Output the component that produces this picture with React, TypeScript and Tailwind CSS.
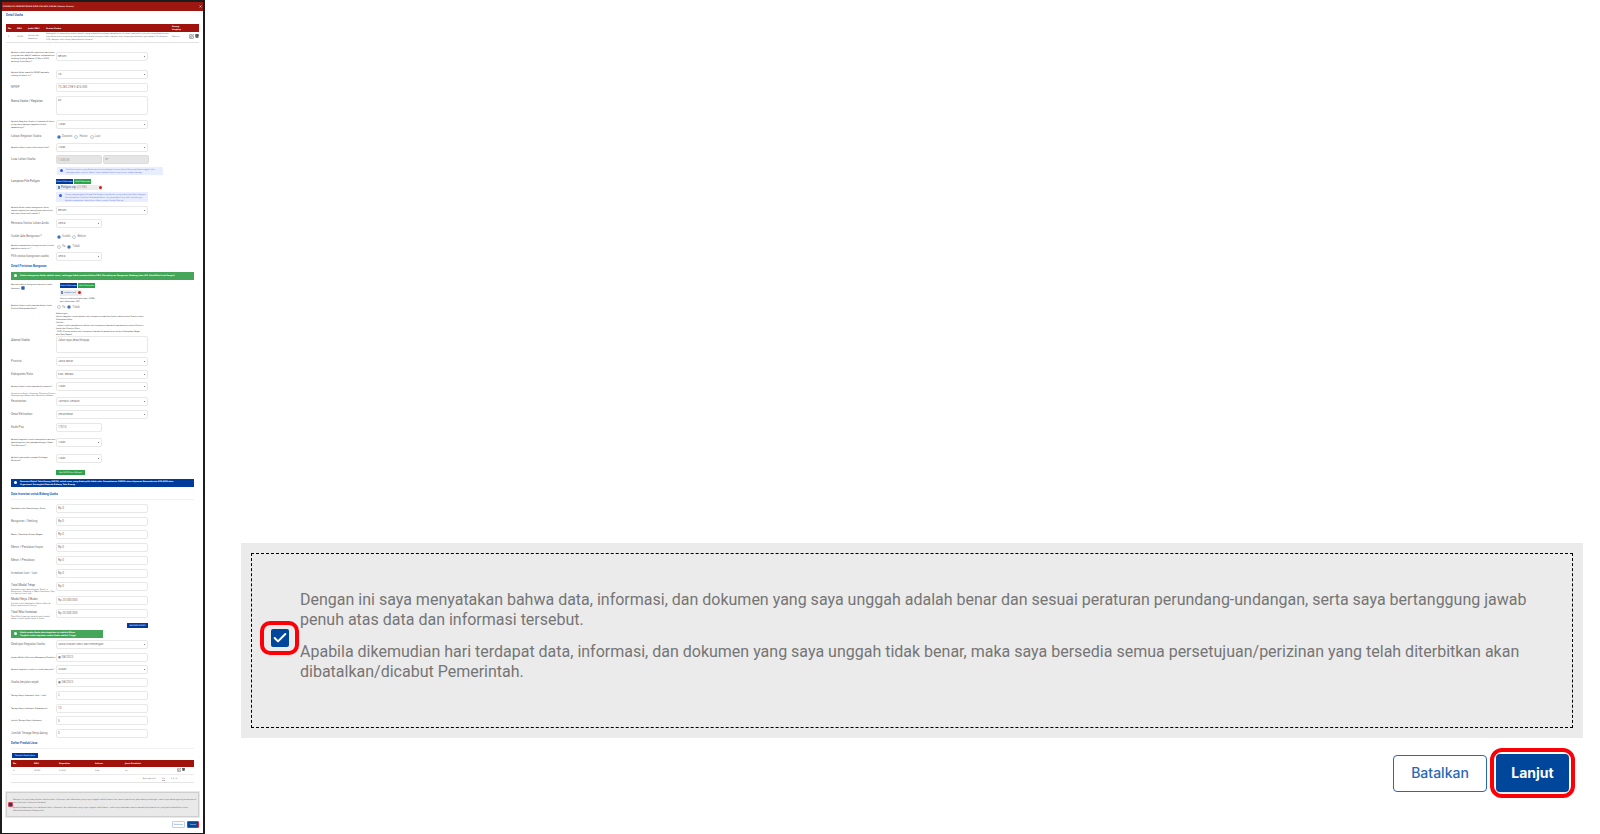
import { useState } from "react";
import type { ReactNode } from "react";
import { Check, CircleAlert, SquarePen, Trash2, X } from "lucide-react";

const DECLARATION = [
  "Dengan ini saya menyatakan bahwa data, informasi, dan dokumen yang saya unggah adalah benar dan sesuai peraturan perundang-undangan, serta saya bertanggung jawab penuh atas data dan informasi tersebut.",
  "Apabila dikemudian hari terdapat data, informasi, dan dokumen yang saya unggah tidak benar, maka saya bersedia semua persetujuan/perizinan yang telah diterbitkan akan dibatalkan/dicabut Pemerintah.",
];

const TEXT = "font-['Roboto',sans-serif] text-[3px]";
const BOX = "rounded-[2px] border border-[#e8e8e8] bg-white px-px text-[#777]";
const HEADING = "flex items-center font-['Roboto',sans-serif] text-[3px] font-bold text-[#2a68b4]";

const labelText = (label: string) => (label.length > 28 ? "text-[#333]" : `text-[#777] ${TEXT}`);

interface RowProps {
  id: string;
  label: string;
  height?: string;
  children: ReactNode;
}

const Row = ({ id, label, height = "h-[13px]", children }: RowProps) => (
  <div className={`flex items-center ${height}`}>
    <label htmlFor={id} className={`w-[45px] shrink-0 ${labelText(label)}`}>
      {label}
    </label>
    {children}
  </div>
);

interface FieldProps {
  id: string;
  label: string;
  value: string;
  height?: string;
  short?: boolean;
}

const SelectRow = ({ id, label, value, height, short }: FieldProps) => (
  <Row id={id} label={label} height={height}>
    <div className={`relative ${short ? "w-[46px]" : "w-[92px]"}`}>
      <select id={id} className={`block h-[9px] w-full appearance-none ${BOX} ${TEXT}`}>
        <option>{value}</option>
      </select>
      <span className="pointer-events-none absolute top-[4px] right-[3px] size-px bg-[#888]" />
    </div>
  </Row>
);

const InputRow = ({ id, label, value, height, short }: FieldProps) => (
  <Row id={id} label={label} height={height}>
    <input
      id={id}
      defaultValue={value}
      className={`h-[9px] ${BOX} ${TEXT} ${short ? "w-[46px]" : "w-[92px]"}`}
    />
  </Row>
);

interface RadioRowProps {
  name: string;
  label: string;
  options: string[];
  selected: string;
  height?: string;
}

const RadioRow = ({ name, label, options, selected, height = "h-[10px]" }: RadioRowProps) => (
  <fieldset className={`flex items-center ${height}`}>
    <span className={`w-[45px] shrink-0 ${labelText(label)}`}>{label}</span>
    <div className={`flex gap-[2px] pl-px ${TEXT}`}>
      {options.map((option) => (
        <label key={option} className="flex items-center gap-px text-[#888]">
          <input
            type="radio"
            name={name}
            defaultChecked={option === selected}
            className="size-[4px] appearance-none rounded-full border border-[#c4ccd8] bg-white checked:border-[#8fb0dc] checked:bg-[#1f5fae]"
          />
          {option}
        </label>
      ))}
    </div>
  </fieldset>
);

const FileButtons = () => (
  <div className="flex h-[5px] gap-px text-white">
    <button type="button" className="w-[17px] bg-[#003a9b]">
      Unduh Dokumen
    </button>
    <button type="button" className="w-[17px] bg-[#2fa34c]">
      Lihat Dokumen
    </button>
  </div>
);

const Info = ({ className, children }: { className: string; children: ReactNode }) => (
  <div className={`flex gap-[3px] bg-[#e8edff] pl-[3px] text-[#5f7be6] ${className}`}>
    <span className="mt-[2px] size-[3px] shrink-0 rounded-full bg-[#2f5be0]" />
    <p className="pt-px">{children}</p>
  </div>
);

const INVESTMENTS = [
  ["tanah", "Pembelian dan Pematangan Tanah"],
  ["gedung", "Bangunan / Gedung"],
  ["mesin-dn", "Mesin / Peralatan Dalam Negeri"],
  ["mesin-impor", "Mesin / Peralatan Impor"],
  ["mesin", "Mesin / Peralatan"],
  ["lain", "Investasi Lain - Lain"],
];

const TOTALS = [
  {
    id: "modal-tetap",
    label: "Total Modal Tetap",
    note: "Pembelian dan Pematangan Tanah + Bangunan / Gedung + Mesin Peralatan (Rp) + Investasi Lain Lain",
    value: "Rp 0",
    height: "h-[14px]",
  },
  {
    id: "modal-kerja",
    label: "Modal Kerja 3 Bulan",
    note: "Contoh untuk Pembelian Bahan Baku & Biaya operasional lainnya",
    value: "Rp 20.000.000",
    height: "h-[13px]",
  },
  {
    id: "nilai-investasi",
    label: "Total Nilai Investasi",
    note: "Total Nilai Investasi adalah total modal tetap + total modal kerja 3 bulan",
    value: "Rp 20.000.000",
    height: "h-[13px]",
  },
];

const FormPreview = () => (
  <aside className="w-[205px] shrink-0 border-2 border-[#1c1c1c] bg-white pb-[5px] font-['DejaVu_Sans',sans-serif] text-[2px] leading-[3px] text-[#666]">
    <header className="flex h-[9px] items-center justify-between bg-[#9c1710] px-px text-[#f3d4d2]">
      <h1 className="font-bold">FORMULIR PENDAFTARAN DATA PELAKU USAHA (Badan Usaha)</h1>
      <button type="button" aria-label="Tutup">
        <X className="size-[3px]" strokeWidth={5} />
      </button>
    </header>

    <section className="px-[4px]">
      <h2 className={`h-[13px] pb-[5px] ${HEADING}`}>Detail Usaha</h2>
      <table className="w-full table-fixed text-left">
        <thead className="bg-[#a0120c] text-white">
          <tr className="h-[8px]">
            <th className="w-[11px] pl-[2px]">No</th>
            <th className="w-[11px]">KBLI</th>
            <th className="w-[18px]">Judul KBLI</th>
            <th>Uraian Usaha</th>
            <th className="w-[17px]">
              Ruang
              <br />
              Lingkup
            </th>
            <th className="w-[10px]" />
          </tr>
        </thead>
        <tbody>
          <tr className="h-[10px] border-b border-[#e2e2e2]">
            <td className="pl-[2px]">1</td>
            <td>11050</td>
            <td>
              Industri Air
              <br />
              Kemasan
            </td>
            <td>
              Kelompok ini mencakup usaha industri yang melakukan proses pengolahan air baku menjadi air minum yang
              dikemas dan siap dikonsumsi langsung, mengandung mineral maupun tidak, dengan atau tanpa penambahan gas
              seperti O2 ataupun CO2, dengan atau tanpa penambahan mineral
            </td>
            <td>Seluruh</td>
            <td>
              <span className="flex gap-px text-[#222]">
                <SquarePen className="size-[5px]" />
                <Trash2 className="size-[4px]" strokeWidth={4} />
              </span>
            </td>
          </tr>
        </tbody>
      </table>
    </section>

    <form className="px-[9px] pt-[3px]">
      <SelectRow
        id="perizinan"
        label="Apakah sudah memiliki perizinan berusaha yang berlaku efektif sebelum implementasi Undang-Undang Nomor 6 Tahun 2023 tentang Cipta Kerja ?"
        value="Belum"
        height="h-[22px]"
      />
      <SelectRow id="npwp" label="Apakah Anda memiliki NPWP berbeda cabang di lokasi ini?" value="Ya" />
      <InputRow id="npwp-nomor" label="NPWP" value="73.283.298.9-416.000" />
      <div className="flex h-[24px] items-center">
        <label htmlFor="nama" className={`w-[45px] self-start pt-[6px] ${TEXT}`}>
          Nama Usaha / Kegiatan
        </label>
        <textarea id="nama" defaultValue="air" className={`h-[19px] w-[92px] resize-none pt-[2px] ${BOX} ${TEXT}`} />
      </div>
      <SelectRow
        id="sama"
        label="Apakah Kegiatan Usaha ini berada di lokasi yang sama dengan kegiatan usaha sebelumnya?"
        value="Tidak"
      />
      <RadioRow
        name="lokasi"
        label="Lokasi Kegiatan Usaha"
        options={["Daratan", "Hutan", "Laut"]}
        selected="Daratan"
        height="h-[12px]"
      />
      <SelectRow id="lintas" label="Apakah lokasi usaha lintas darat laut?" value="Tidak" height="h-[10px]" />
      <Row id="luas" label="Luas Lahan Usaha" height="h-[14px]">
        <input
          id="luas"
          defaultValue="1.500,00"
          disabled
          className={`h-[9px] w-[46px] rounded-[2px] border border-[#dcdcdc] bg-[#e5e5e5] px-px text-[#999] ${TEXT}`}
        />
        <select
          aria-label="Satuan luas"
          disabled
          className={`ml-px h-[9px] w-[46px] appearance-none rounded-[2px] border border-[#dcdcdc] bg-[#e5e5e5] px-px text-[#999] ${TEXT}`}
        >
          <option>M²</option>
        </select>
      </Row>
      <Info className="ml-[46px] h-[8px] w-[106px]">
        Pastikan luasan yang Anda input sama dengan luasan lokasi file yang Anda unggah. Jika menggunakan satuan Hektar
        ubah terlebih dahulu ke satuan meter persegi.
      </Info>
      <div className="flex pt-[4px]">
        <span className={`w-[45px] shrink-0 pt-px ${TEXT}`}>Lampiran File Poligon</span>
        <div className="w-[92px]">
          <FileButtons />
          <div
            className={`mt-px flex h-[5px] w-[46px] items-center gap-px bg-[#ececec] pl-[2px] text-[#2a68b4] ${TEXT}`}
          >
            <span className="h-[3px] w-[2px] border border-[#5b8fcc]" />
            Poligon.zip
            <span className="text-[#999]">(22 KB)</span>
            <span className="ml-auto size-[3px] rounded-full bg-[#c3261e]" />
          </div>
          <Info className="mt-[2px] h-[10px]">
            Harap mengunggah Shape File Poligon (koordinat) yang sudah divalidasi dengan format berikut. Pastikan file
            berekstensi .zip yang berisi shp, dbf, shx dan prj. Apabila mengalami kesulitan silakan unduh format file
            zip.
          </Info>
        </div>
      </div>
      <SelectRow
        id="lahan"
        label="Apakah Anda sudah menguasai lahan melalui perjanjian sewa/pinjam pakai/jual beli atau lahan milik sendiri?"
        value="Belum"
        height="h-[17px]"
      />
      <SelectRow id="status-lahan" label="Rencana Status Lahan Anda" value="Sewa" height="h-[9px]" short />
      <div className="pt-[4px]">
        <RadioRow name="bangunan" label="Sudah Ada Bangunan ?" options={["Sudah", "Belum"]} selected="Sudah" />
        <RadioRow
          name="baru"
          label="Apakah memerlukan bangunan baru untuk kegiatan usaha ini ?"
          options={["Ya", "Tidak"]}
          selected="Tidak"
        />
      </div>
      <SelectRow id="status-bangunan" label="Pilih status bangunan usaha" value="Sewa" height="h-[10px]" short />

      <h3 className={`h-[10px] ${HEADING}`}>Detail Perizinan Bangunan</h3>
      <p className="flex h-[8px] items-center gap-[3px] bg-[#45a558] pl-[3px] font-bold text-white">
        <span className="size-[3px] rounded-full bg-white" />
        Status bangunan Anda adalah sewa, sehingga tidak membutuhkan PBG (Persetujuan Bangunan Gedung) dan SLF
        (Sertifikat Laik Fungsi)
      </p>
      <div className="flex pt-[3px]">
        <p className="w-[49px] shrink-0 text-[#333]">
          Rencana teknis bangunan/rencana induk kawasan
          <CircleAlert className="ml-px inline size-[4px] rounded-full bg-[#003a9b] text-white" />
        </p>
        <div>
          <FileButtons />
          <div className="mt-[2px] flex h-[6px] w-[22px] items-center gap-px bg-[#ececec] px-px text-[#2a68b4]">
            <span className="h-[3px] w-[2px] border border-[#5b8fcc]" />
            siteplan.pdf
            <span className="ml-auto size-[3px] rounded-full bg-[#c3261e]" />
          </div>
          <p className="pt-px text-[#333]">
            Ukuran maksimal dokumen: 10MB
            <br />
            Jenis dokumen: PDF
          </p>
        </div>
      </div>
      <RadioRow
        name="provinsi-lintas"
        label="Apakah lokasi usaha berada dalam lintas Provinsi/Kabupaten/Kota?"
        options={["Ya", "Tidak"]}
        selected="Tidak"
        height="h-[9px]"
      />
      <p className="ml-[45px] h-[24px] text-[#333]">
        Keterangan:
        <br />
        Lokasi kegiatan usaha dalam satu hamparan melintasi batas administrasi Provinsi atau
        <br />
        Kabupaten/Kota.
        <br />
        Contoh:
        <br />
        - Lokasi usaha perkebunan dalam satu hamparan berada di perbatasan antara Provinsi
        <br />
        Jambi dan Provinsi Riau.
        <br />
        - PLTU Cilacap dalam satu hamparan berada di perbatasan antara Kabupaten Bogor
        <br />
        dan Kota Depok.
      </p>
      <div className="flex h-[17px]">
        <label htmlFor="alamat" className={`w-[45px] pt-[3px] ${TEXT}`}>
          Alamat Usaha
        </label>
        <textarea
          id="alamat"
          defaultValue="Jalan raya desa bhayap"
          className={`h-[17px] w-[92px] resize-none pt-[2px] ${BOX} ${TEXT}`}
        />
      </div>
      <div className="pt-[2px]">
        <SelectRow id="provinsi" label="Provinsi" value="Jawa Barat" />
        <SelectRow id="kabupaten" label="Kabupaten/Kota" value="Kab. Bekasi" />
        <SelectRow id="kawasan" label="Apakah lokasi usaha berada di kawasan?" value="Tidak" height="h-[11px]" />
        <p className="h-[4px] w-[45px] leading-[2px]">
          Kawasan Industri, Kawasan Ekonomi Khusus,
          <br />
          Perdagangan Bebas dan Pelabuhan Bebas
        </p>
        <SelectRow id="kecamatan" label="Kecamatan" value="Tambun Selatan" height="h-[12px]" />
        <SelectRow id="desa" label="Desa/Kelurahan" value="Setiamekar" />
        <InputRow id="kodepos" label="Kode Pos" value="17510" short />
        <SelectRow
          id="obvit"
          label="Apakah kegiatan usaha merupakan rencana pembangunan dan pengembangan Objek Vital Nasional ?"
          value="Tidak"
          height="h-[18px]"
          short
        />
        <SelectRow
          id="psn"
          label="Apakah merupakan proyek Strategis Nasional?"
          value="Tidak"
          height="h-[14px]"
          short
        />
      </div>
      <button type="button" className="mt-[4px] ml-[45px] block h-[5px] w-[29px] bg-[#2fa34c] text-white">
        Cek RDTR Dan Wilayah
      </button>
      <div className="mt-[4px] flex h-[8px] gap-[3px] bg-[#003a9b] pt-px pl-[3px] text-white">
        <span className="mt-px size-[3px] shrink-0 rounded-full bg-white" />
        <p className="font-bold">
          Rencana Detail Tata Ruang (RDTR) untuk area yang Anda pilih tidak ada. Permohonan PKKPR akan diproses
          Kementerian ATR/BPN atau
          <br />
          Organisasi Perangkat Daerah Bidang Tata Ruang
        </p>
      </div>

      <h3 className={`mt-[4px] h-[9px] border-b border-[#f0f0f0] ${HEADING}`}>Data Investasi untuk Bidang Usaha</h3>
      <div className="pt-[2px]">
        {INVESTMENTS.map(([id, label]) => (
          <InputRow key={id} id={id} label={label} value="Rp 0" />
        ))}
        {TOTALS.map((total) => (
          <div key={total.id} className={`flex ${total.height}`}>
            <div className="w-[45px] shrink-0 pt-[4px] pr-px">
              <label htmlFor={total.id} className={`block ${TEXT}`}>
                {total.label}
              </label>
              <p className="pt-px leading-[2px]">{total.note}</p>
            </div>
            <input id={total.id} defaultValue={total.value} className={`mt-[2px] h-[9px] w-[92px] ${BOX} ${TEXT}`} />
          </div>
        ))}
      </div>
      <button type="button" className="mt-[3px] ml-[116px] block h-[5px] w-[21px] bg-[#003a9b] text-white">
        VALIDASI RISIKO
      </button>
      <div className="mt-[2px] flex h-[8px] w-[92px] gap-[3px] bg-[#45a558] pt-px pl-[3px] text-white">
        <span className="mt-px size-[3px] shrink-0 rounded-full bg-white" />
        <p className="font-bold">
          Skala usaha Anda atas kegiatan ini adalah Mikro
          <br />
          Tingkat risiko kegiatan usaha Anda adalah Tinggi
        </p>
      </div>
      <SelectRow id="deskripsi" label="Deskripsi Kegiatan Usaha" value="Skala industri kecil dan menengah" />
      <InputRow id="jangka" label="Jangka Waktu Perkiraan Beroperasi/Produksi" value="▣ 08/2023" />
      <SelectRow
        id="berjalan"
        label="Apakah kegiatan usaha ini sudah berjalan?"
        value="Sudah"
        height="h-[12px]"
      />
      <InputRow id="sejak" label="Usaha berjalan sejak" value="▣ 08/2023" />
      <InputRow id="tki-l" label="Tenaga Kerja Indonesia (Laki - Laki)" value="2" />
      <InputRow id="tki-p" label="Tenaga Kerja Indonesia (Perempuan)" value="10" />
      <InputRow id="tki" label="Jumlah Tenaga Kerja Indonesia" value="5" height="h-[12px]" />
      <InputRow id="tka" label="Jumlah Tenaga Kerja Asing" value="0" />

      <h3 className={`h-[9px] border-b border-[#f0f0f0] ${HEADING}`}>Daftar Produk/Jasa</h3>
      <button type="button" className="mt-[4px] ml-px block h-[5px] w-[26px] bg-[#003a9b] text-white">
        Tambah Produk/Jasa
      </button>
      <table className="mt-[2px] w-full table-fixed text-left">
        <thead className="bg-[#a0120c] text-white">
          <tr className="h-[7px]">
            <th className="w-[23px] pl-[2px]">No</th>
            <th className="w-[25px]">KBLI</th>
            <th className="w-[36px]">Kapasitas</th>
            <th className="w-[30px]">Satuan</th>
            <th>Jenis Produksi</th>
            <th className="w-[17px]" />
          </tr>
        </thead>
        <tbody>
          <tr className="h-[8px] border-b border-[#ececec]">
            <td className="pl-[2px]">1</td>
            <td>11050</td>
            <td>1.0000</td>
            <td>Liter</td>
            <td>air</td>
            <td>
              <span className="flex gap-px text-[#222]">
                <SquarePen className="size-[4px]" />
                <Trash2 className="size-[3px]" strokeWidth={4} />
              </span>
            </td>
          </tr>
        </tbody>
      </table>
      <div className="flex h-[8px] items-center justify-end gap-[6px] border-b border-[#e4e4e4] pr-[3px]">
        <span>Baris per hal.</span>
        <span className="border-b border-[#bbb]">5 ▾</span>
        <span>1-1 / 1</span>
        <span>‹</span>
        <span>›</span>
      </div>
    </form>

    <div className="mx-[3px] mt-[8px] h-[27px] bg-[#e9e9e9] p-px">
      <div className="flex h-full items-center border border-[#cfcfcf] pl-px">
        <input
          type="checkbox"
          defaultChecked
          aria-label="Setuju"
          className="size-[5px] shrink-0 appearance-none rounded-[1px] border border-[#e8404a] bg-[#00479b]"
        />
        <div className="flex flex-col gap-[2px]">
          {DECLARATION.map((text) => (
            <p key={text}>{text}</p>
          ))}
        </div>
      </div>
    </div>
    <div className="mt-[3px] flex h-[7px] justify-end gap-[2px] pr-[4px]">
      <button type="button" className="w-[13px] rounded-[1px] border border-[#bcd0ea] text-[#2a68b4]">
        Batalkan
      </button>
      <button type="button" className="w-[12px] rounded-[1px] border border-[#e8202a] bg-[#00479b] text-white">
        Lanjut
      </button>
    </div>
  </aside>
);

const App = () => {
  const [agreed, setAgreed] = useState(true);

  return (
    <div className="flex bg-white">
      <FormPreview />

      <main className="flex flex-1 flex-col justify-end pr-[17px] pb-[37px] pl-9">
        <div className="bg-[#ebebeb] p-[10px]">
          <div className="flex min-h-[175px] items-center border border-dashed border-black pr-5 pb-[6px] pl-2">
            <label
              htmlFor="agree"
              className="relative flex h-[34px] w-[39px] shrink-0 items-center justify-center rounded-[10px] border-4 border-[#fb0007]"
            >
              <input
                id="agree"
                type="checkbox"
                checked={agreed}
                onChange={(e) => setAgreed(e.target.checked)}
                aria-label="Saya menyetujui pernyataan"
                className="size-[18px] appearance-none rounded-[2px] border-2 border-[#00479b] bg-white checked:bg-[#00479b]"
              />
              {agreed && <Check className="pointer-events-none absolute size-4 text-white" strokeWidth={3} />}
            </label>
            <div className="flex flex-col gap-3 pb-1 pl-px font-['Roboto',sans-serif] text-base leading-5 text-[#757575]">
              {DECLARATION.map((text) => (
                <p key={text}>{text}</p>
              ))}
            </div>
          </div>
        </div>

        <div className="flex items-center justify-end gap-[3px] pt-[10px] pr-2 font-['Inter',sans-serif] text-sm">
          <button
            type="button"
            className="h-[37px] w-[94px] rounded-[4px] border border-[#2a68b4] bg-white font-medium text-[#2a68b4]"
          >
            Batalkan
          </button>
          <div className="rounded-[12px] border-4 border-[#fb0007] p-[2px]">
            <button type="button" className="block h-[38px] w-[73px] rounded-[4px] bg-[#00479b] font-bold text-white shadow">
              Lanjut
            </button>
          </div>
        </div>
      </main>
    </div>
  );
};

export default App;
